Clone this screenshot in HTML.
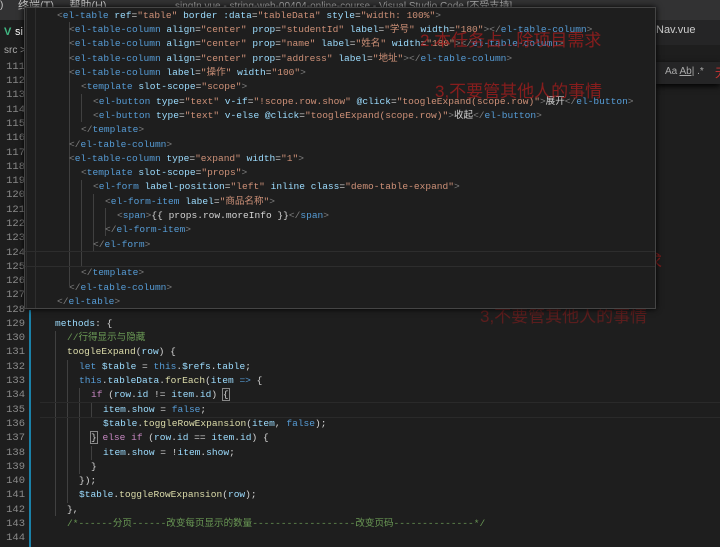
<!DOCTYPE html>
<html><head><meta charset="utf-8"><style>
body{margin:0;width:720px;height:547px;overflow:hidden;background:#1e1e1e;position:relative;font-family:"Liberation Mono","Noto Sans CJK SC",monospace;font-size:9.55px;color:#d4d4d4}
.l{position:absolute;white-space:pre;height:14px;line-height:14px}
.n{position:absolute;width:25px;text-align:right;color:#8a8a8a;line-height:14px;font-size:10.5px}
.t{color:#569cd6}.b{color:#808080}.a{color:#9cdcfe}.s{color:#ce9178}.c{color:#6a9955}.k{color:#c586c0}.f{color:#dcdcaa}.v{color:#9cdcfe}
.g{position:absolute;width:1px;background:#404040}
.red{position:absolute;color:rgba(170,30,30,.75);font-family:"Liberation Sans","Noto Sans CJK SC",sans-serif;font-size:17px;white-space:nowrap}
</style></head><body>
<div style="position:absolute;left:0;top:0;width:720px;height:20px;background:#323233"></div>
<div style="position:absolute;left:0;top:0;font:10px 'Liberation Sans','Noto Sans CJK SC',sans-serif;color:#ccc">)</div>
<div style="position:absolute;left:18px;top:-3px;font:11px 'Liberation Sans','Noto Sans CJK SC',sans-serif;color:#ccc">终端(T)&nbsp;&nbsp;&nbsp;&nbsp;&nbsp;帮助(H)</div>
<div style="position:absolute;left:175px;top:-3px;font:10px 'Liberation Sans','Noto Sans CJK SC',sans-serif;color:#aaa">singIn.vue - string-web-00404-online-course - Visual Studio Code [不受支持]</div>
<div style="position:absolute;left:0;top:20px;width:720px;height:25px;background:#252526"></div>
<div style="position:absolute;left:0;top:20px;width:24px;height:25px;background:#1e1e1e"></div>
<div style="position:absolute;left:4px;top:26px;color:#41b883;font:bold 11px 'Liberation Sans',sans-serif">V</div>
<div style="position:absolute;left:15px;top:26px;color:#fff;font:11px 'Liberation Sans',sans-serif">si</div>
<div style="position:absolute;left:656px;top:24px;color:#ccc;font:11px 'Liberation Sans',sans-serif">Nav.vue</div>
<div style="position:absolute;left:0;top:45px;width:720px;height:13px;background:#1e1e1e"></div>
<div style="position:absolute;left:4px;top:45px;color:#aaa;font:10px 'Liberation Sans',sans-serif">src &gt;</div>
<div style="position:absolute;left:655px;top:62px;width:65px;height:22px;background:#252526;box-shadow:0 2px 6px #000"></div>
<div style="position:absolute;left:665px;top:66px;color:#aaa;font:10px 'Liberation Sans',sans-serif">Aa <u>Ab|</u> .*</div>
<div style="position:absolute;left:715px;top:64px;color:#c33;font:12px 'Noto Sans CJK SC',sans-serif">无</div>

<div class="n" style="left:0;top:60px">111</div>
<div class="n" style="left:0;top:74px">112</div>
<div class="n" style="left:0;top:88px">113</div>
<div class="n" style="left:0;top:103px">114</div>
<div class="n" style="left:0;top:117px">115</div>
<div class="n" style="left:0;top:131px">116</div>
<div class="n" style="left:0;top:146px">117</div>
<div class="n" style="left:0;top:160px">118</div>
<div class="n" style="left:0;top:174px">119</div>
<div class="n" style="left:0;top:188px">120</div>
<div class="n" style="left:0;top:203px">121</div>
<div class="n" style="left:0;top:217px">122</div>
<div class="n" style="left:0;top:231px">123</div>
<div class="n" style="left:0;top:246px">124</div>
<div class="n" style="left:0;top:260px">125</div>
<div class="n" style="left:0;top:274px">126</div>
<div class="n" style="left:0;top:288px">127</div>
<div class="n" style="left:0;top:303px">128</div>
<div class="n" style="left:0;top:317px">129</div>
<div class="n" style="left:0;top:331px">130</div>
<div class="n" style="left:0;top:345px">131</div>
<div class="n" style="left:0;top:360px">132</div>
<div class="n" style="left:0;top:374px">133</div>
<div class="n" style="left:0;top:388px">134</div>
<div class="n" style="left:0;top:403px">135</div>
<div class="n" style="left:0;top:417px">136</div>
<div class="n" style="left:0;top:431px">137</div>
<div class="n" style="left:0;top:446px">138</div>
<div class="n" style="left:0;top:460px">139</div>
<div class="n" style="left:0;top:474px">140</div>
<div class="n" style="left:0;top:488px">141</div>
<div class="n" style="left:0;top:503px">142</div>
<div class="n" style="left:0;top:517px">143</div>
<div class="n" style="left:0;top:531px">144</div>
<div style="position:absolute;left:29px;top:310px;width:2px;height:237px;background:#1b81a8"></div>

<div class="red" style="left:645px;top:247px">求</div>
<div class="red" style="left:480px;top:302px;opacity:.6">3,不要管其他人的事情</div>

<div class="g" style="left:55px;top:331px;height:185px"></div>
<div class="g" style="left:67px;top:360px;height:143px"></div>
<div class="g" style="left:79px;top:388px;height:86px"></div>
<div class="g" style="left:91px;top:403px;height:14px"></div>
<div class="g" style="left:91px;top:446px;height:14px"></div>
<div style="position:absolute;left:40px;top:402px;width:680px;height:14px;border-top:1px solid #2a2a2a;border-bottom:1px solid #2a2a2a"></div>
<div class="l" style="left:55px;top:317px"><span class="v">methods</span>: {</div>
<div class="l c" style="left:67px;top:331px">//行得显示与隐藏</div>
<div class="l" style="left:67px;top:345px"><span class="f">toogleExpand</span>(<span class="v">row</span>) {</div>
<div class="l" style="left:79px;top:360px"><span class="t">let</span> <span class="v">$table</span> = <span class="t">this</span>.<span class="v">$refs</span>.<span class="v">table</span>;</div>
<div class="l" style="left:79px;top:374px"><span class="t">this</span>.<span class="v">tableData</span>.<span class="f">forEach</span>(<span class="v">item</span> <span class="t">=&gt;</span> {</div>
<div class="l" style="left:91px;top:388px"><span class="k">if</span> (<span class="v">row</span>.<span class="v">id</span> != <span class="v">item</span>.<span class="v">id</span>) <span style="outline:1px solid #888">{</span></div>
<div class="l" style="left:103px;top:403px"><span class="v">item</span>.<span class="v">show</span> = <span class="t">false</span>;</div>
<div class="l" style="left:103px;top:417px"><span class="v">$table</span>.<span class="f">toggleRowExpansion</span>(<span class="v">item</span>, <span class="t">false</span>);</div>
<div class="l" style="left:91px;top:431px"><span style="outline:1px solid #888">}</span> <span class="k">else if</span> (<span class="v">row</span>.<span class="v">id</span> == <span class="v">item</span>.<span class="v">id</span>) {</div>
<div class="l" style="left:103px;top:446px"><span class="v">item</span>.<span class="v">show</span> = !<span class="v">item</span>.<span class="v">show</span>;</div>
<div class="l" style="left:91px;top:460px">}</div>
<div class="l" style="left:79px;top:474px">});</div>
<div class="l" style="left:79px;top:488px"><span class="v">$table</span>.<span class="f">toggleRowExpansion</span>(<span class="v">row</span>);</div>
<div class="l" style="left:67px;top:503px">},</div>
<div class="l c" style="left:67px;top:517px">/*------分页------改变每页显示的数量------------------改变页码--------------*/</div>

<div style="position:absolute;left:24px;top:7px;width:630px;height:300px;background:#1e1e1e;border:1px solid #454545;box-shadow:0 0 6px #000;overflow:hidden">
<div class="g" style="left:1px;top:0;height:300px;background:#2e2e2e"></div>
<div class="g" style="left:10px;top:0;height:300px;background:#2e2e2e"></div>
<div class="g" style="left:44px;top:14px;height:264px"></div>
<div class="g" style="left:56px;top:86px;height:28px"></div>
<div class="g" style="left:56px;top:172px;height:86px"></div>
<div class="g" style="left:68px;top:186px;height:57px"></div>
<div class="g" style="left:80px;top:200px;height:28px"></div>
<div style="position:absolute;left:0;top:243px;width:630px;height:14px;border-top:1px solid #2d2d2d;border-bottom:1px solid #2d2d2d"></div>
<div class="l" style="left:32px;top:1px"><span class="b">&lt;</span><span class="t">el-table</span> <span class="a">ref</span>=<span class="s">"table"</span> <span class="a">border</span> <span class="a">:data</span>=<span class="s">"tableData"</span> <span class="a">style</span>=<span class="s">"width: 100%"</span><span class="b">&gt;</span></div>
<div class="l" style="left:44px;top:15px"><span class="b">&lt;</span><span class="t">el-table-column</span> <span class="a">align</span>=<span class="s">"center"</span> <span class="a">prop</span>=<span class="s">"studentId"</span> <span class="a">label</span>=<span class="s">"学号"</span> <span class="a">width</span>=<span class="s">"180"</span><span class="b">&gt;&lt;/</span><span class="t">el-table-column</span><span class="b">&gt;</span></div>
<div class="l" style="left:44px;top:29px"><span class="b">&lt;</span><span class="t">el-table-column</span> <span class="a">align</span>=<span class="s">"center"</span> <span class="a">prop</span>=<span class="s">"name"</span> <span class="a">label</span>=<span class="s">"姓名"</span> <span class="a">width</span>=<span class="s">"180"</span><span class="b">&gt;&lt;/</span><span class="t">el-table-column</span><span class="b">&gt;</span></div>
<div class="l" style="left:44px;top:44px"><span class="b">&lt;</span><span class="t">el-table-column</span> <span class="a">align</span>=<span class="s">"center"</span> <span class="a">prop</span>=<span class="s">"address"</span> <span class="a">label</span>=<span class="s">"地址"</span><span class="b">&gt;&lt;/</span><span class="t">el-table-column</span><span class="b">&gt;</span></div>
<div class="l" style="left:44px;top:58px"><span class="b">&lt;</span><span class="t">el-table-column</span> <span class="a">label</span>=<span class="s">"操作"</span> <span class="a">width</span>=<span class="s">"100"</span><span class="b">&gt;</span></div>
<div class="l" style="left:56px;top:72px"><span class="b">&lt;</span><span class="t">template</span> <span class="a">slot-scope</span>=<span class="s">"scope"</span><span class="b">&gt;</span></div>
<div class="l" style="left:68px;top:87px"><span class="b">&lt;</span><span class="t">el-button</span> <span class="a">type</span>=<span class="s">"text"</span> <span class="a">v-if</span>=<span class="s">"!scope.row.show"</span> <span class="a">@click</span>=<span class="s">"toogleExpand(scope.row)"</span><span class="b">&gt;</span>展开<span class="b">&lt;/</span><span class="t">el-button</span><span class="b">&gt;</span></div>
<div class="l" style="left:68px;top:101px"><span class="b">&lt;</span><span class="t">el-button</span> <span class="a">type</span>=<span class="s">"text"</span> <span class="a">v-else</span> <span class="a">@click</span>=<span class="s">"toogleExpand(scope.row)"</span><span class="b">&gt;</span>收起<span class="b">&lt;/</span><span class="t">el-button</span><span class="b">&gt;</span></div>
<div class="l" style="left:56px;top:115px"><span class="b">&lt;/</span><span class="t">template</span><span class="b">&gt;</span></div>
<div class="l" style="left:44px;top:130px"><span class="b">&lt;/</span><span class="t">el-table-column</span><span class="b">&gt;</span></div>
<div class="l" style="left:44px;top:144px"><span class="b">&lt;</span><span class="t">el-table-column</span> <span class="a">type</span>=<span class="s">"expand"</span> <span class="a">width</span>=<span class="s">"1"</span><span class="b">&gt;</span></div>
<div class="l" style="left:56px;top:158px"><span class="b">&lt;</span><span class="t">template</span> <span class="a">slot-scope</span>=<span class="s">"props"</span><span class="b">&gt;</span></div>
<div class="l" style="left:68px;top:172px"><span class="b">&lt;</span><span class="t">el-form</span> <span class="a">label-position</span>=<span class="s">"left"</span> <span class="a">inline</span> <span class="a">class</span>=<span class="s">"demo-table-expand"</span><span class="b">&gt;</span></div>
<div class="l" style="left:80px;top:187px"><span class="b">&lt;</span><span class="t">el-form-item</span> <span class="a">label</span>=<span class="s">"商品名称"</span><span class="b">&gt;</span></div>
<div class="l" style="left:92px;top:201px"><span class="b">&lt;</span><span class="t">span</span><span class="b">&gt;</span>{{ props.row.moreInfo }}<span class="b">&lt;/</span><span class="t">span</span><span class="b">&gt;</span></div>
<div class="l" style="left:80px;top:215px"><span class="b">&lt;/</span><span class="t">el-form-item</span><span class="b">&gt;</span></div>
<div class="l" style="left:68px;top:230px"><span class="b">&lt;/</span><span class="t">el-form</span><span class="b">&gt;</span></div>
<div class="l" style="left:56px;top:258px"><span class="b">&lt;/</span><span class="t">template</span><span class="b">&gt;</span></div>
<div class="l" style="left:44px;top:273px"><span class="b">&lt;/</span><span class="t">el-table-column</span><span class="b">&gt;</span></div>
<div class="l" style="left:32px;top:287px"><span class="b">&lt;/</span><span class="t">el-table</span><span class="b">&gt;</span></div>
</div>
<div class="red" style="left:420px;top:26px">2.本任务占...除项目需求</div>
<div class="red" style="left:435px;top:77px">3,不要管其他人的事情</div>
</body></html>
